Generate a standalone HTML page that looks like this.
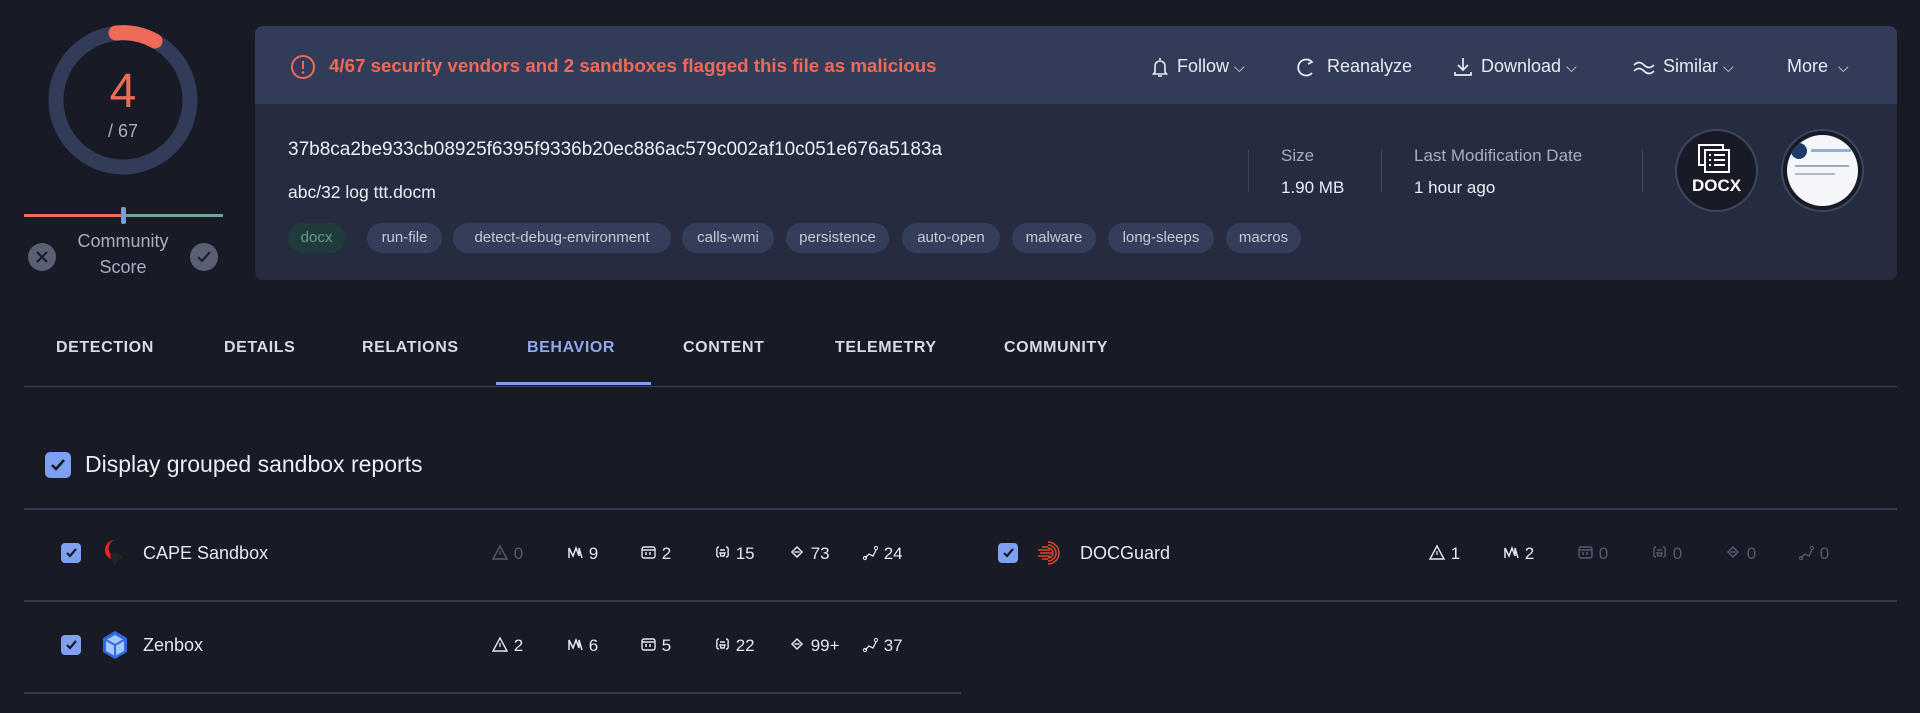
<!DOCTYPE html>
<html><head><meta charset="utf-8"><style>
*{margin:0;padding:0;box-sizing:border-box}
body{width:1920px;height:713px;background:#181a26;font-family:"Liberation Sans",sans-serif;color:#e6e8ef;position:relative;overflow:hidden}
.a{position:absolute;white-space:nowrap}
.tag{position:absolute;top:223px;height:30px;line-height:30px;border-radius:15px;background:#343e5a;color:#c5cad8;font-size:15px;text-align:center}
.btn{position:absolute;top:56px;font-size:18px;color:#e8ebf2}
.tab{position:absolute;top:339px;font-size:16px;font-weight:bold;color:#d7dbe5;letter-spacing:.6px}
.cb{position:absolute;width:20px;height:20px;border-radius:4px;background:#7f9ff0}
.cb svg{position:absolute;left:3px;top:3px}
.st{position:absolute;font-size:17px;color:#e6e8ef}
.dim{color:#555b70}
.line{position:absolute;height:2px;background:#343c55}
</style></head><body>
<svg class="a" style="left:40px;top:17px" width="166" height="166" viewBox="0 0 166 166">
<circle cx="83" cy="83" r="67" fill="none" stroke="#323c58" stroke-width="15"/>
<path d="M76 16 A67 67 0 0 1 115 24" fill="none" stroke="#f06a58" stroke-width="15" stroke-linecap="round"/>
</svg>
<div class="a" style="left:0;width:246px;text-align:center;top:64px;font-size:48px;color:#f06a58">4</div>
<div class="a" style="left:0;width:246px;text-align:center;top:121px;font-size:18px;color:#a8aec0">/ 67</div>
<div class="a" style="left:24px;top:214px;width:99px;height:3px;background:#f06a58"></div>
<div class="a" style="left:123px;top:214px;width:100px;height:3px;background:#6aa898"></div>
<div class="a" style="left:121px;top:207px;width:5px;height:17px;border-radius:2px;background:#7f9ad8"></div>
<div class="a" style="left:0;width:246px;text-align:center;top:228px;font-size:18px;line-height:26px;color:#a8aec0">Community<br>Score</div>
<svg class="a" style="left:28px;top:243px" width="28" height="28"><circle cx="14" cy="14" r="14" fill="#5a6073"/><path d="M9 9L19 19M19 9L9 19" stroke="#181a26" stroke-width="2"/></svg>
<svg class="a" style="left:190px;top:243px" width="28" height="28"><circle cx="14" cy="14" r="14" fill="#5a6073"/><path d="M8 14l4 4 8-9" stroke="#181a26" stroke-width="2" fill="none"/></svg>
<div class="a" style="left:255px;top:26px;width:1642px;height:254px;border-radius:8px;background:#262c40;overflow:hidden">
<div style="height:78px;background:#323c58"></div></div>
<svg class="a" style="left:290px;top:54px" width="26" height="26"><circle cx="13" cy="13" r="11" fill="none" stroke="#f06a58" stroke-width="2"/><path d="M13 7v8" stroke="#f06a58" stroke-width="2"/><circle cx="13" cy="18.5" r="1.3" fill="#f06a58"/></svg>
<div class="a" style="left:329px;top:55px;font-size:18.7px;font-weight:bold;color:#f06a58">4/67 security vendors and 2 sandboxes flagged this file as malicious</div>
<svg class="a" style="left:1150px;top:55px" width="20" height="24"><path d="M10 3v2M5 17V11a5 5 0 0 1 10 0v6l1.5 2h-13z M8 21h4" stroke="#e8ebf2" stroke-width="1.6" fill="none"/></svg>
<div class="btn" style="left:1177px">Follow <span style="font-size:14px">⌵</span></div>
<svg class="a" style="left:1295px;top:55px" width="22" height="24"><path d="M17 7A8 8 0 1 0 17 18" stroke="#e8ebf2" stroke-width="1.8" fill="none"/><path d="M13 4l4 3-4 2" stroke="#e8ebf2" stroke-width="1.6" fill="none"/></svg>
<div class="btn" style="left:1327px">Reanalyze</div>
<svg class="a" style="left:1452px;top:55px" width="22" height="24"><path d="M11 3v12M6 10l5 5 5-5M3 17v3h16v-3" stroke="#e8ebf2" stroke-width="1.7" fill="none"/></svg>
<div class="btn" style="left:1481px">Download <span style="font-size:14px">⌵</span></div>
<svg class="a" style="left:1632px;top:56px" width="24" height="22"><path d="M2 9q5-5 10 0t10 0M2 15q5-5 10 0t10 0" stroke="#e8ebf2" stroke-width="1.7" fill="none"/></svg>
<div class="btn" style="left:1663px">Similar <span style="font-size:14px">⌵</span></div>
<div class="btn" style="left:1787px">More &nbsp;<span style="font-size:14px">⌵</span></div>
<div class="a" style="left:288px;top:139px;font-size:19px;color:#eceef4">37b8ca2be933cb08925f6395f9336b20ec886ac579c002af10c051e676a5183a</div>
<div class="a" style="left:288px;top:182px;font-size:17.5px;color:#eceef4">abc/32 log ttt.docm</div>
<div class="tag" style="left:288px;width:57px;background:#213b3c;color:#5fa08a">docx</div>
<div class="tag" style="left:367px;width:75px">run-file</div>
<div class="tag" style="left:453px;width:218px">detect-debug-environment</div>
<div class="tag" style="left:682px;width:92px">calls-wmi</div>
<div class="tag" style="left:786px;width:103px">persistence</div>
<div class="tag" style="left:902px;width:98px">auto-open</div>
<div class="tag" style="left:1012px;width:84px">malware</div>
<div class="tag" style="left:1108px;width:106px">long-sleeps</div>
<div class="tag" style="left:1226px;width:75px">macros</div>
<div class="a" style="left:1248px;top:150px;width:1px;height:42px;background:#3d465f"></div>
<div class="a" style="left:1281px;top:146px;font-size:17px;color:#a8aec0">Size</div>
<div class="a" style="left:1281px;top:178px;font-size:17px;color:#eceef4">1.90 MB</div>
<div class="a" style="left:1381px;top:150px;width:1px;height:42px;background:#3d465f"></div>
<div class="a" style="left:1414px;top:146px;font-size:17px;color:#a8aec0">Last Modification Date</div>
<div class="a" style="left:1414px;top:178px;font-size:17px;color:#eceef4">1 hour ago</div>
<div class="a" style="left:1642px;top:150px;width:1px;height:42px;background:#3d465f"></div>
<div class="a" style="left:1675px;top:129px;width:83px;height:83px;border-radius:50%;background:#181a26;border:2px solid #3d465f"></div>
<svg class="a" style="left:1697px;top:143px" width="40" height="34"><rect x="2" y="2" width="24" height="20" fill="#181a26" stroke="#fff" stroke-width="2"/><rect x="8" y="7" width="24" height="22" fill="#181a26" stroke="#fff" stroke-width="2"/><path d="M12 12h2M17 12h11M12 17h2M17 17h11M12 22h2M17 22h11" stroke="#fff" stroke-width="2"/></svg>
<div class="a" style="left:1675px;width:83px;text-align:center;top:176px;font-size:17px;font-weight:bold;color:#fff">DOCX</div>
<div class="a" style="left:1781px;top:129px;width:83px;height:83px;border-radius:50%;background:#181a26;border:2px solid #3d465f"></div>
<div class="a" style="left:1787px;top:135px;width:71px;height:71px;border-radius:50%;background:#f4f6fa;overflow:hidden"><div style="position:absolute;left:4px;top:8px;width:16px;height:16px;border-radius:50%;background:#1d3c6a"></div><div style="position:absolute;left:24px;top:14px;width:40px;height:3px;background:#8fb0d8"></div><div style="position:absolute;left:8px;top:30px;width:54px;height:2px;background:#9aaac0"></div><div style="position:absolute;left:8px;top:38px;width:40px;height:2px;background:#b0bacb"></div></div>
<div class="tab" style="left:56px">DETECTION</div>
<div class="tab" style="left:224px">DETAILS</div>
<div class="tab" style="left:362px">RELATIONS</div>
<div class="tab" style="left:527px;color:#8fa9ee">BEHAVIOR</div>
<div class="tab" style="left:683px">CONTENT</div>
<div class="tab" style="left:835px">TELEMETRY</div>
<div class="tab" style="left:1004px">COMMUNITY</div>
<div class="line" style="left:24px;top:386px;width:1873px;height:1px;background:#3a4259"></div>
<div class="a" style="left:496px;top:382px;width:155px;height:3px;background:#7f9ff0"></div>
<div class="cb" style="left:45px;top:452px;width:26px;height:26px;border-radius:5px"><svg width="20" height="20" style="left:3px;top:3px"><path d="M4 10l4 4 8-9" stroke="#181a26" stroke-width="2.6" fill="none"/></svg></div>
<div class="a" style="left:85px;top:451px;font-size:23px;color:#eceef4">Display grouped sandbox reports</div>
<div class="line" style="left:24px;top:508px;width:1873px"></div>
<div class="line" style="left:24px;top:600px;width:1873px"></div>
<div class="line" style="left:24px;top:692px;width:937px"></div>
<div class="cb" style="left:61px;top:543px"><svg width="14" height="14"><path d="M3 7l3 3 6-7" stroke="#181a26" stroke-width="2.2" fill="none"/></svg></div>
<svg class="a" style="left:102px;top:538px" width="24" height="30"><path d="M12 2a10 10 0 1 0 8 17A8 8 0 1 1 12 2z" fill="#e8262a"/><path d="M8 18q4-6 12 0l-8 10z" fill="#222"/></svg>
<div class="a" style="left:143px;top:543px;font-size:18px">CAPE Sandbox</div>
<div class="cb" style="left:61px;top:635px"><svg width="14" height="14"><path d="M3 7l3 3 6-7" stroke="#181a26" stroke-width="2.2" fill="none"/></svg></div>
<svg class="a" style="left:101px;top:630px" width="28" height="30"><path d="M14 1l12 7v14l-12 7-12-7V8z" fill="#2d6be4"/><path d="M14 5l9 5v11l-9 5-9-5V10z" fill="#a8c6ff"/><path d="M14 15v11M5 10l9 5 9-5" stroke="#2d6be4" stroke-width="2" fill="none"/></svg>
<div class="a" style="left:143px;top:635px;font-size:18px">Zenbox</div>
<div class="cb" style="left:998px;top:543px"><svg width="14" height="14"><path d="M3 7l3 3 6-7" stroke="#181a26" stroke-width="2.2" fill="none"/></svg></div>
<svg class="a" style="left:1036px;top:540px" width="30" height="26"><g fill="none" stroke="#e0452c" stroke-width="1.5"><path d="M12 2a11 11 0 0 1 0 22M12 5a8 8 0 0 1 0 16M12 8a5 5 0 0 1 0 10M2 10h12M4 13h12M2 16h12M6 7h6M6 19h6"/></g></svg>
<div class="a" style="left:1080px;top:543px;font-size:18px">DOCGuard</div>
<svg width="0" height="0" style="position:absolute"><defs>
<g id="w"><path d="M8 2L15 15H1z" fill="none" stroke="currentColor" stroke-width="1.4"/><path d="M8 7v4" stroke="currentColor" stroke-width="1.3"/></g>
<g id="m"><path d="M2 14V4l4 8 3-8 3 8V4l3 10" fill="none" stroke="currentColor" stroke-width="1.5"/></g>
<g id="b"><rect x="2" y="3" width="13" height="11" rx="2" fill="none" stroke="currentColor" stroke-width="1.4"/><path d="M2 6h13M6 8v3M10 8v3" stroke="currentColor" stroke-width="1.5"/></g>
<g id="r"><path d="M5 3Q2 3 3 8Q2 13 5 13M12 3Q15 3 14 8Q15 13 12 13M6 6h5M6 9h5l-1 3H7z" fill="none" stroke="currentColor" stroke-width="1.4"/></g>
<g id="d"><path d="M8 3l5 5-5 5-5-5z M5.5 8h5" fill="none" stroke="currentColor" stroke-width="1.5"/></g>
<g id="n"><path d="M3 14l4-4 4 2 3-6" fill="none" stroke="currentColor" stroke-width="1.3"/><circle cx="3" cy="14" r="1.6" fill="none" stroke="currentColor"/><circle cx="14" cy="4" r="1.6" fill="none" stroke="currentColor"/></g>
</defs></svg>
<div class="st dim" style="left:492px;top:544px"><svg width="17" height="17" style="vertical-align:-2px;color:#555b70"><use href="#w"/></svg> 0</div>
<div class="st" style="left:567px;top:544px"><svg width="17" height="17" style="vertical-align:-2px;color:#e6e8ef"><use href="#m"/></svg> 9</div>
<div class="st" style="left:640px;top:544px"><svg width="17" height="17" style="vertical-align:-2px;color:#e6e8ef"><use href="#b"/></svg> 2</div>
<div class="st" style="left:714px;top:544px"><svg width="17" height="17" style="vertical-align:-2px;color:#e6e8ef"><use href="#r"/></svg> 15</div>
<div class="st" style="left:789px;top:544px"><svg width="17" height="17" style="vertical-align:-2px;color:#e6e8ef"><use href="#d"/></svg> 73</div>
<div class="st" style="left:862px;top:544px"><svg width="17" height="17" style="vertical-align:-2px;color:#e6e8ef"><use href="#n"/></svg> 24</div>
<div class="st" style="left:492px;top:636px"><svg width="17" height="17" style="vertical-align:-2px;color:#e6e8ef"><use href="#w"/></svg> 2</div>
<div class="st" style="left:567px;top:636px"><svg width="17" height="17" style="vertical-align:-2px;color:#e6e8ef"><use href="#m"/></svg> 6</div>
<div class="st" style="left:640px;top:636px"><svg width="17" height="17" style="vertical-align:-2px;color:#e6e8ef"><use href="#b"/></svg> 5</div>
<div class="st" style="left:714px;top:636px"><svg width="17" height="17" style="vertical-align:-2px;color:#e6e8ef"><use href="#r"/></svg> 22</div>
<div class="st" style="left:789px;top:636px"><svg width="17" height="17" style="vertical-align:-2px;color:#e6e8ef"><use href="#d"/></svg> 99+</div>
<div class="st" style="left:862px;top:636px"><svg width="17" height="17" style="vertical-align:-2px;color:#e6e8ef"><use href="#n"/></svg> 37</div>
<div class="st" style="left:1429px;top:544px"><svg width="17" height="17" style="vertical-align:-2px;color:#e6e8ef"><use href="#w"/></svg> 1</div>
<div class="st" style="left:1503px;top:544px"><svg width="17" height="17" style="vertical-align:-2px;color:#e6e8ef"><use href="#m"/></svg> 2</div>
<div class="st dim" style="left:1577px;top:544px"><svg width="17" height="17" style="vertical-align:-2px;color:#555b70"><use href="#b"/></svg> 0</div>
<div class="st dim" style="left:1651px;top:544px"><svg width="17" height="17" style="vertical-align:-2px;color:#555b70"><use href="#r"/></svg> 0</div>
<div class="st dim" style="left:1725px;top:544px"><svg width="17" height="17" style="vertical-align:-2px;color:#555b70"><use href="#d"/></svg> 0</div>
<div class="st dim" style="left:1798px;top:544px"><svg width="17" height="17" style="vertical-align:-2px;color:#555b70"><use href="#n"/></svg> 0</div>
</body></html>
